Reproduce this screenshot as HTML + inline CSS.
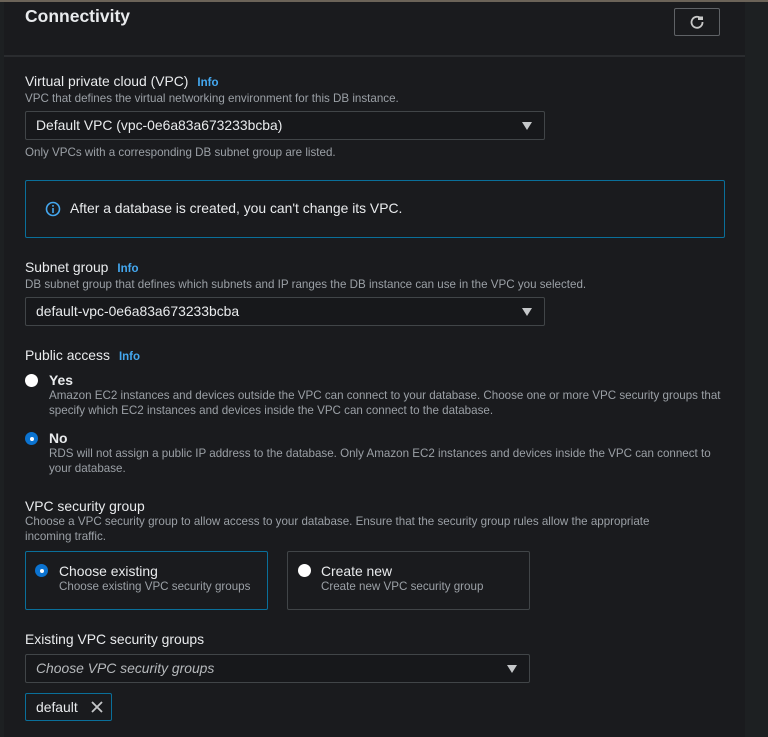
<!DOCTYPE html>
<html><head><meta charset="utf-8"><style>
*{margin:0;padding:0;box-sizing:border-box}
body{width:768px;height:737px;background:#1d2022;font-family:"Liberation Sans",sans-serif;position:relative;overflow:hidden;color:#e9ebed}
.panel{position:absolute;left:4px;top:0;width:741px;height:737px;background:#1a1b1e}
.top{position:absolute;left:0;top:0;width:768px;height:2px;background:#6b6358}
.a{position:absolute;white-space:nowrap}
.h{font-size:13.9px;color:#e9ebed}
.d{font-size:11.6px;color:#9ba0a6}
.info{font-size:11.5px;font-weight:bold;color:#44a8f0;margin-left:9px}
.sel{position:absolute;border:1px solid #414548;border-radius:2px;background:#17181b;font-size:13.9px;padding-left:10px;line-height:27px}
.tri{position:absolute;right:12px;top:10px;width:0;height:0;border-left:5px solid transparent;border-right:5px solid transparent;border-top:8px solid #c5c7c9}
.rad{position:absolute;width:13px;height:13px;border-radius:50%;background:#fff}
.rad.on{background:#0b73d0;}
.rad.on::after{content:"";position:absolute;left:4.5px;top:4.5px;width:4px;height:4px;border-radius:50%;background:#fff}
.card{position:absolute;border:1px solid #414548;border-radius:2px}
</style></head><body>
<div class="panel"></div>
<div class="top"></div>
<div class="a" style="left:25px;top:6px;font-size:17.5px;font-weight:bold">Connectivity</div>
<div style="position:absolute;left:674px;top:8px;width:46px;height:28px;border:1px solid #5f6266;border-radius:2px"></div>
<svg style="position:absolute;left:688px;top:13px" width="18" height="18" viewBox="0 0 18 18"><path d="M13 5.5A5.5 5.5 0 1 0 14.5 9" fill="none" stroke="#c8c8c8" stroke-width="1.8"/><path d="M10 3.5h5v-1.5v5h-5z" fill="#c8c8c8"/></svg>
<div style="position:absolute;left:4px;top:55px;width:741px;height:2px;background:#2a2c2f"></div>

<div class="a h" style="left:25px;top:73px">Virtual private cloud (VPC)<span class="info">Info</span></div>
<div class="a d" style="left:25px;top:92px">VPC that defines the virtual networking environment for this DB instance.</div>
<div class="sel" style="left:25px;top:111px;width:520px;height:29px">Default VPC (vpc-0e6a83a673233bcba)<div class="tri"></div></div>
<div class="a d" style="left:25px;top:146px">Only VPCs with a corresponding DB subnet group are listed.</div>

<div style="position:absolute;left:25px;top:180px;width:700px;height:58px;border:1px solid #0a6f9a;border-radius:2px;background:#1a1b1e"></div>
<svg style="position:absolute;left:45px;top:201px" width="16" height="16" viewBox="0 0 16 16"><circle cx="8" cy="8" r="6.5" fill="none" stroke="#44a8f0" stroke-width="1.6"/><rect x="7.2" y="7" width="1.6" height="5" fill="#44a8f0"/><rect x="7.2" y="4" width="1.6" height="1.7" fill="#44a8f0"/></svg>
<div class="a h" style="left:70px;top:200px">After a database is created, you can't change its VPC.</div>

<div class="a h" style="left:25px;top:259px">Subnet group<span class="info">Info</span></div>
<div class="a d" style="left:25px;top:278px">DB subnet group that defines which subnets and IP ranges the DB instance can use in the VPC you selected.</div>
<div class="sel" style="left:25px;top:297px;width:520px;height:29px">default-vpc-0e6a83a673233bcba<div class="tri"></div></div>

<div class="a h" style="left:25px;top:347px">Public access<span class="info">Info</span></div>
<div class="rad" style="left:25px;top:374px"></div>
<div class="a h" style="left:49px;top:372px;font-weight:bold">Yes</div>
<div class="a d" style="left:49px;top:389px">Amazon EC2 instances and devices outside the VPC can connect to your database. Choose one or more VPC security groups that</div>
<div class="a d" style="left:49px;top:404px">specify which EC2 instances and devices inside the VPC can connect to the database.</div>
<div class="rad on" style="left:25px;top:432px"></div>
<div class="a h" style="left:49px;top:430px;font-weight:bold">No</div>
<div class="a d" style="left:49px;top:447px">RDS will not assign a public IP address to the database. Only Amazon EC2 instances and devices inside the VPC can connect to</div>
<div class="a d" style="left:49px;top:462px">your database.</div>

<div class="a h" style="left:25px;top:498px">VPC security group</div>
<div class="a d" style="left:25px;top:515px">Choose a VPC security group to allow access to your database. Ensure that the security group rules allow the appropriate</div>
<div class="a d" style="left:25px;top:530px">incoming traffic.</div>

<div class="card" style="left:25px;top:551px;width:243px;height:59px;border-color:#0a6f9a"></div>
<div class="rad on" style="left:35px;top:564px"></div>
<div class="a h" style="left:59px;top:563px">Choose existing</div>
<div class="a d" style="left:59px;top:580px">Choose existing VPC security groups</div>
<div class="card" style="left:287px;top:551px;width:243px;height:59px"></div>
<div class="rad" style="left:298px;top:564px"></div>
<div class="a h" style="left:321px;top:563px">Create new</div>
<div class="a d" style="left:321px;top:580px">Create new VPC security group</div>

<div class="a h" style="left:25px;top:631px">Existing VPC security groups</div>
<div class="sel" style="left:25px;top:654px;width:505px;height:29px;font-style:italic;color:#b6b9bc">Choose VPC security groups<div class="tri"></div></div>
<div style="position:absolute;left:25px;top:693px;width:87px;height:28px;border:1px solid #0a6f9a;border-radius:2px;font-size:13.9px;line-height:26px;padding-left:10px">default</div>
<svg style="position:absolute;left:90px;top:700px" width="14" height="14" viewBox="0 0 14 14"><path d="M2 2L12 12M12 2L2 12" stroke="#c5c7c9" stroke-width="1.8"/></svg>
</body></html>
